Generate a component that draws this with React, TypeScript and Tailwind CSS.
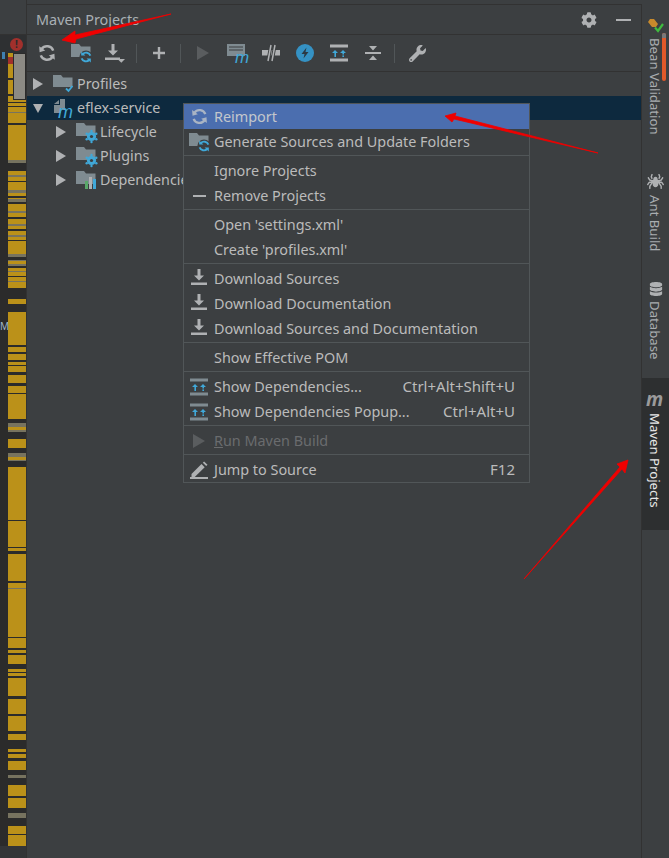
import { FaCog, FaDatabase, FaSpider, FaWrench } from 'react-icons/fa'

const ICON_GRAY = '#afb1b3'
const FOLDER_GRAY = '#7f8b91'
const BLUE = '#40a8d8'

// scroll marks of the editor stripe: [end y, kind], starting from y=53
const MARKS: [number, 'g' | 'r' | 'd' | 'x'][] = [
  [57, 'g'], [64, 'r'], [78, 'g'], [80, 'd'], [94, 'g'], [96, 'd'], [102, 'g'], [103, 'd'], [106, 'g'], [107, 'd'],
  [112, 'g'], [113, 'x'], [123, 'g'], [125, 'd'], [160, 'g'], [163, 'x'], [171, 'd'], [175, 'g'], [177, 'x'], [181, 'g'],
  [182, 'd'], [190, 'g'], [193, 'x'], [196, 'g'], [198, 'd'], [199, 'g'], [202, 'x'], [204, 'd'], [211, 'g'], [213, 'x'],
  [217, 'g'], [219, 'd'], [224, 'g'], [226, 'x'], [229, 'g'], [231, 'd'], [235, 'g'], [237, 'x'], [240, 'g'], [241, 'd'],
  [254, 'g'], [257, 'x'], [260, 'd'], [261, 'x'], [264, 'g'], [266, 'x'], [268, 'd'], [271, 'g'], [272, 'x'], [276, 'g'],
  [277, 'd'], [281, 'g'], [282, 'x'], [288, 'g'], [299, 'd'], [304, 'g'], [312, 'd'], [345, 'g'], [347, 'd'], [352, 'g'],
  [354, 'd'], [360, 'g'], [362, 'd'], [365, 'g'], [366, 'd'], [372, 'g'], [375, 'd'], [383, 'g'], [386, 'd'], [393, 'g'],
  [394, 'd'], [419, 'g'], [423, 'd'], [427, 'x'], [430, 'g'], [432, 'x'], [439, 'd'], [448, 'g'], [453, 'd'], [457, 'x'],
  [460, 'g'], [461, 'x'], [467, 'd'], [520, 'g'], [521, 'd'], [547, 'g'], [548, 'd'], [551, 'g'], [554, 'd'], [581, 'g'],
  [583, 'd'], [588, 'g'], [589, 'x'], [637, 'g'], [638, 'd'], [648, 'g'], [650, 'd'], [653, 'g'], [655, 'd'], [664, 'g'],
  [669, 'd'], [672, 'g'], [673, 'd'], [676, 'g'], [678, 'd'], [696, 'g'], [699, 'd'], [714, 'g'], [716, 'd'], [731, 'g'],
  [734, 'd'], [740, 'g'], [749, 'd'], [752, 'g'], [754, 'd'], [758, 'g'], [761, 'd'], [770, 'g'], [775, 'd'], [778, 'x'],
  [785, 'd'], [796, 'g'], [798, 'd'], [808, 'g'], [813, 'd'], [818, 'x'], [826, 'd'], [834, 'g'], [835, 'd'], [846, 'g'],
]

const MARK_COLORS = { g: '#bb9119', r: '#a1302c', d: '#2b2b2b', x: '#77735f' }

const Stripe = () => {
  let prev = 53
  return (
    <div className="ml-[8px] flex w-[18px] flex-col">
      {MARKS.map(([end, kind]) => {
        const h = end - prev
        prev = end
        return <div key={end} style={{ height: h, background: MARK_COLORS[kind] }} />
      })}
    </div>
  )
}

const Refresh = ({ size = 18, color = ICON_GRAY, width = 2.4 }: { size?: number; color?: string; width?: number }) => (
  <svg width={size} height={size} viewBox="0 0 18 18" fill="none">
    <path d="M15.2 6.6A6.6 6.6 0 0 0 3.6 5" stroke={color} strokeWidth={width} />
    <path d="M2.8 11.4A6.6 6.6 0 0 0 14.4 13" stroke={color} strokeWidth={width} />
    <path d="M1.2 2.2 1.6 8.2 7.2 6.6Z" fill={color} />
    <path d="M16.8 15.8 16.4 9.8 10.8 11.4Z" fill={color} />
  </svg>
)

const Folder = ({ children }: { children?: React.ReactNode }) => (
  <svg width="21" height="20" viewBox="0 0 21 20" fill="none" className="overflow-visible">
    <path d="M0 1h8l2 2.5h9.5V14H0Z" fill={FOLDER_GRAY} />
    {children}
  </svg>
)

const RefreshBadge = () => (
  <g fill="none">
    <circle cx="15" cy="14" r="6.6" fill="#3c3f41" />
    <path d="M19.4 12.6A4.6 4.6 0 0 0 11.8 11" stroke={BLUE} strokeWidth="1.9" />
    <path d="M10.6 15.4A4.6 4.6 0 0 0 18.2 17" stroke={BLUE} strokeWidth="1.9" />
    <path d="M10.2 8.4v4.2H14.4Z" fill={BLUE} />
    <path d="M19.8 19.6v-4.2H15.6Z" fill={BLUE} />
  </g>
)

const GearBadge = () => (
  <g>
    <circle cx="15.5" cy="14.5" r="4.6" fill={BLUE} />
    <circle cx="15.5" cy="8.9" r="1.2" fill={BLUE} />
    <circle cx="15.5" cy="20" r="1.2" fill={BLUE} />
    <circle cx="10.7" cy="11.7" r="1.2" fill={BLUE} />
    <circle cx="20.3" cy="11.7" r="1.2" fill={BLUE} />
    <circle cx="10.7" cy="17.3" r="1.2" fill={BLUE} />
    <circle cx="20.3" cy="17.3" r="1.2" fill={BLUE} />
    <circle cx="15.5" cy="14.5" r="1.6" fill="#3c3f41" />
  </g>
)

const Download = ({ dropdown }: { dropdown?: boolean }) => (
  <svg width={dropdown ? 22 : 18} height="19" viewBox={dropdown ? '0 0 22 19' : '0 0 18 19'}>
    <path d="M7.5 0h3v6.5H14l-5 5-5-5h3.5Z" fill={ICON_GRAY} />
    <rect x="1" y="13.5" width={dropdown ? 15 : 16} height="2.5" fill={ICON_GRAY} />
    {dropdown && <path d="M13.5 15h7.5l-3.7 3.8Z" fill={ICON_GRAY} />}
  </svg>
)

const Deps = ({ color = ICON_GRAY }: { color?: string }) => (
  <svg width="18" height="18" viewBox="0 0 18 18">
    <rect x="0" y="0.5" width="18" height="3" fill={color} />
    <rect x="0" y="14.5" width="18" height="3" fill={color} />
    <path d="M5 6 8 9H6v4H4.4V9H2Z" fill={BLUE} />
    <path d="M13 6 16 9h-2v1.4h-1.6V9H10Z" fill={BLUE} />
    <rect x="12.4" y="11.4" width="1.6" height="1.6" fill={BLUE} />
  </svg>
)

const Pencil = () => (
  <svg width="18" height="18" viewBox="0 0 18 18">
    <path d="M1.5 13 11.5 3l3.2 3.2-10 9.8H1.5Z" fill={ICON_GRAY} />
    <path d="M12.8 1.7l1.3-1.3 3.4 3.4-1.3 1.3Z" fill={ICON_GRAY} />
    <rect x="0" y="16" width="18" height="2" fill={ICON_GRAY} />
  </svg>
)

const BlueM = ({ className }: { className: string }) => (
  <span
    className={`absolute font-['Liberation_Sans',sans-serif] leading-none font-normal text-[#40a8d8] italic ${className}`}
  >
    m
  </span>
)

const Chevron = ({ open }: { open?: boolean }) => (
  <svg width="12" height="14" viewBox="0 0 12 14">
    {open ? <path d="M1 3h10L6 12Z" fill={ICON_GRAY} /> : <path d="M1 1l10 6-10 6Z" fill={ICON_GRAY} />}
  </svg>
)

const Sep = () => <div className="my-auto mr-[5px] ml-[4px] h-[19px] w-px bg-[#515658]" />

const ToolButton = ({ children }: { children: React.ReactNode }) => (
  <div className="flex h-full w-[34px] items-center justify-center">{children}</div>
)

const TreeRow = ({
  label,
  icon,
  indent,
  open,
  selected,
}: {
  label: string
  icon: React.ReactNode
  indent: boolean
  open?: boolean
  selected?: boolean
}) => (
  <div
    className={`flex h-[24px] items-center ${selected ? 'bg-[#0d293e]' : ''} ${indent ? 'pl-[28px]' : 'pl-[5px]'}`}
  >
    <Chevron open={open} />
    <div className="ml-[9px] flex w-[24px] items-center">{icon}</div>
    <span className="mb-[1px] text-[14.3px] text-[#bbbbbb]">{label}</span>
  </div>
)

const MenuRow = ({
  label,
  icon,
  shortcut,
  selected,
  disabled,
}: {
  label: React.ReactNode
  icon?: React.ReactNode
  shortcut?: string
  selected?: boolean
  disabled?: boolean
}) => (
  <div
    className={`flex h-[25px] items-center pr-[14px] text-[14.4px] ${selected ? 'bg-[#4b6eaf] text-[#c3c7cc]' : disabled ? 'text-[#6a6c6e]' : 'text-[#bbbbbb]'}`}
  >
    <div className="flex w-[30px] items-center justify-center">{icon}</div>
    <span className="flex-1">{label}</span>
    {shortcut && <span className="text-[15px]">{shortcut}</span>}
  </div>
)

const MenuSep = () => <div className="mt-px mb-[2px] h-px bg-[#515658]" />

const VerticalTab = ({ label, icon, active, className }: { label: string; icon: React.ReactNode; active?: boolean; className: string }) => (
  <div className={`flex flex-col items-center ${active ? 'bg-[#2d2f30]' : ''} ${className}`}>
    {icon}
    <span
      className={`mt-[5px] -ml-[2px] text-[13.2px] leading-[16px] [writing-mode:vertical-rl] ${active ? 'text-[#e8e8e8]' : 'text-[#a9adb0]'}`}
    >
      {label}
    </span>
  </div>
)

export default function App() {
  return (
    <div className="relative flex h-[858px] w-[669px] overflow-hidden bg-[#3c3f41] font-['Noto_Sans',sans-serif]">
      {/* Editor gutter + error stripe */}
      <div className="flex h-full w-[27px] flex-col border-r border-[#323232]">
        <div className="h-[35px] border-b border-[#323232]" />
        <div className="relative flex-1 bg-[#2b2b2b]">
          <div className="flex h-[18px] items-center justify-end bg-[#2e3032] pr-[3px]">
            <div className="flex h-[13px] w-[13px] items-center justify-center rounded-full bg-[#a1302c] text-[10px] leading-none font-bold text-[#2b2b2b]">
              !
            </div>
          </div>
          <Stripe />
          <div className="absolute top-[17px] left-[2px] h-[7px] w-[3px] bg-[#3f7fb0]" />
          <div className="absolute top-[18px] left-[13px] h-[47px] w-[13px] border border-[#2b2b2b] bg-[#8c8a84]" />
          <span className="absolute top-[284px] left-0 text-[10px] leading-[14px] text-[#9fb6c9]">M</span>
          <div className="absolute right-0 bottom-0 left-0 h-[12px] bg-[#333537]" />
        </div>
      </div>

      {/* Maven tool window */}
      <div className="flex h-full w-[614px] flex-col">
        <div className="h-[5px] border-b border-[#323232]" />
        <div className="flex h-[30px] items-center justify-between border-b border-[#323232] pr-[10px] pl-[9px]">
          <span className="text-[14.4px] text-[#a9b0b5]">Maven Projects</span>
          <div className="flex items-center gap-[19px]">
            <FaCog size={16} color={ICON_GRAY} />
            <div className="h-[2px] w-[15px] bg-[#afb1b3]" />
          </div>
        </div>
        <div className="flex h-[37px] items-center border-b border-[#323232] pl-[3px]">
          <ToolButton>
            <Refresh />
          </ToolButton>
          <ToolButton>
            <Folder>
              <RefreshBadge />
            </Folder>
          </ToolButton>
          <ToolButton>
            <Download dropdown />
          </ToolButton>
          <Sep />
          <ToolButton>
            <svg width="14" height="14" viewBox="0 0 14 14">
              <path d="M5.8 1h2.4v4.8H13v2.4H8.2V13H5.8V8.2H1V5.8h4.8Z" fill={ICON_GRAY} />
            </svg>
          </ToolButton>
          <Sep />
          <ToolButton>
            <svg width="14" height="16" viewBox="0 0 14 16">
              <path d="M1 1l12 7-12 7Z" fill="#5a5d5f" />
            </svg>
          </ToolButton>
          <ToolButton>
            <div className="relative h-[20px] w-[20px]">
              <svg width="20" height="20" viewBox="0 0 20 20" className="absolute top-0 left-0">
                <path d="M0 1h18v12H0Z" fill={FOLDER_GRAY} />
                <path d="M2 4h14M2 7h14" stroke="#3c3f41" strokeWidth="1.2" />
              </svg>
              <BlueM className="top-[6px] left-[8px] text-[17px]" />
            </div>
          </ToolButton>
          <ToolButton>
            <svg width="18" height="18" viewBox="0 0 18 18">
              <rect x="0" y="6" width="18" height="5.5" fill={ICON_GRAY} />
              <path d="M6 17 9 1M10 17 13 1" stroke="#3c3f41" strokeWidth="3.4" />
              <path d="M6 17 9 1M10 17 13 1" stroke={ICON_GRAY} strokeWidth="1.5" />
            </svg>
          </ToolButton>
          <ToolButton>
            <svg width="18" height="18" viewBox="0 0 18 18">
              <circle cx="9" cy="9" r="9" fill="#3592c4" />
              <path d="M10.5 3.5 5.5 10h3l-1 4.5L12.5 8h-3Z" fill="#2b3a45" />
            </svg>
          </ToolButton>
          <ToolButton>
            <Deps />
          </ToolButton>
          <ToolButton>
            <svg width="16" height="16" viewBox="0 0 16 16">
              <rect x="0" y="7" width="16" height="2" fill={ICON_GRAY} />
              <path d="M4 1h8L8 5.5Z M4 15h8L8 10.5Z" fill={ICON_GRAY} />
            </svg>
          </ToolButton>
          <Sep />
          <ToolButton>
            <FaWrench size={17} color={ICON_GRAY} />
          </ToolButton>
        </div>
        <div>
          <TreeRow
            label="Profiles"
            indent={false}
            icon={
              <svg width="21" height="20" viewBox="0 0 21 20" fill="none">
                <path d="M0 1h8l2 2.5h9.5V13H0Z" fill={FOLDER_GRAY} />
                <path d="M13 14.5l2.5 2.5 4-5" stroke={BLUE} strokeWidth="1.8" />
              </svg>
            }
          />
          <TreeRow
            label="eflex-service"
            indent={false}
            open
            selected
            icon={
              <div className="relative h-[20px] w-[20px]">
                <svg width="20" height="20" viewBox="0 0 20 20" className="absolute top-0 left-0">
                  <path d="M1 6 6 2v4Z M7 1h5v11H8v3H1V7h6Z" fill={FOLDER_GRAY} />
                </svg>
                <BlueM className="top-[5px] left-[5px] text-[18px]" />
              </div>
            }
          />
          <TreeRow
            label="Lifecycle"
            indent
            icon={
              <Folder>
                <GearBadge />
              </Folder>
            }
          />
          <TreeRow
            label="Plugins"
            indent
            icon={
              <Folder>
                <GearBadge />
              </Folder>
            }
          />
          <TreeRow
            label="Dependencies"
            indent
            icon={
              <Folder>
                <rect x="9" y="11" width="3" height="8" fill="#59a869" />
                <rect x="13" y="7" width="3" height="12" fill="#afb1b3" />
                <rect x="17" y="9" width="3" height="10" fill={BLUE} />
              </Folder>
            }
          />
        </div>
      </div>

      {/* Right tool strip */}
      <div className="mt-[4px] flex h-[854px] w-[28px] flex-col border-l border-[#323232]">
        <VerticalTab
          label="Bean Validation"
          className="pt-[14px]"
          icon={
            <svg width="17" height="15" viewBox="0 0 17 15" fill="none" className="-ml-[1px]">
              <path d="M1 4 3 1h4l4 5-2 3H5Z" fill="#c88a2c" />
              <path d="M8 9.5 11 13 16 6" stroke="#3fbb3f" strokeWidth="2.2" />
            </svg>
          }
        />
        <VerticalTab
          label="Ant Build"
          className="pt-[38px]"
          icon={<FaSpider size={17} color={ICON_GRAY} />}
        />
        <VerticalTab
          label="Database"
          className="pt-[31px]"
          icon={<FaDatabase size={14} color={ICON_GRAY} />}
        />
        <VerticalTab
          label="Maven Projects"
          active
          className="mt-[18px] h-[152px] pt-[13px]"
          icon={<span className="-ml-[2px] text-[19px] leading-[17px] font-bold text-[#9a9a9a] italic">m</span>}
        />
      </div>

      {/* Scrollbar over the strip */}
      <div className="absolute top-[33px] left-[662px] h-[48px] w-[4px] overflow-hidden rounded-full bg-[#e0592a]">
        <div className="h-[5px] bg-[#77797b]" />
      </div>

      {/* Context menu */}
      <div className="absolute top-[103px] left-[183px] w-[347px] border border-[#515658] bg-[#3c3f41]">
        <MenuRow label="Reimport" selected icon={<Refresh size={17} color="#a9b4c4" />} />
        <MenuRow
          label="Generate Sources and Update Folders"
          icon={
            <Folder>
              <RefreshBadge />
            </Folder>
          }
        />
        <MenuSep />
        <MenuRow label="Ignore Projects" />
        <MenuRow label="Remove Projects" icon={<div className="h-[2px] w-[13px] bg-[#afb1b3]" />} />
        <MenuSep />
        <MenuRow label="Open 'settings.xml'" />
        <MenuRow label="Create 'profiles.xml'" />
        <MenuSep />
        <MenuRow label="Download Sources" icon={<Download />} />
        <MenuRow label="Download Documentation" icon={<Download />} />
        <MenuRow label="Download Sources and Documentation" icon={<Download />} />
        <MenuSep />
        <MenuRow label="Show Effective POM" />
        <MenuSep />
        <MenuRow label="Show Dependencies..." shortcut="Ctrl+Alt+Shift+U" icon={<Deps color={FOLDER_GRAY} />} />
        <MenuRow label="Show Dependencies Popup..." shortcut="Ctrl+Alt+U" icon={<Deps color={FOLDER_GRAY} />} />
        <MenuSep />
        <MenuRow
          label={
            <>
              <span className="underline">R</span>un Maven Build
            </>
          }
          disabled
          icon={
            <svg width="14" height="16" viewBox="0 0 14 16">
              <path d="M1 1l12 7-12 7Z" fill="#5a5d5f" />
            </svg>
          }
        />
        <MenuSep />
        <MenuRow label="Jump to Source" shortcut="F12" icon={<Pencil />} />
      </div>

      {/* Red annotation arrows */}
      <svg className="pointer-events-none absolute top-0 left-0" width="669" height="858" viewBox="0 0 669 858">
        <path d="M62 40 L75 31 L75 35 L171 14 L76 39 L75 43Z" fill="#f00000" stroke="#f00000" strokeWidth="0.8" />
        <path d="M445 116 L456 113 L455 116 L598 153 L454 119 L452 122Z" fill="#f00000" stroke="#f00000" strokeWidth="0.8" />
        <path d="M628 460 L625 473 L622 469 L524 579 L620 467 L617 464Z" fill="#f00000" stroke="#f00000" strokeWidth="0.8" />
      </svg>
    </div>
  )
}
